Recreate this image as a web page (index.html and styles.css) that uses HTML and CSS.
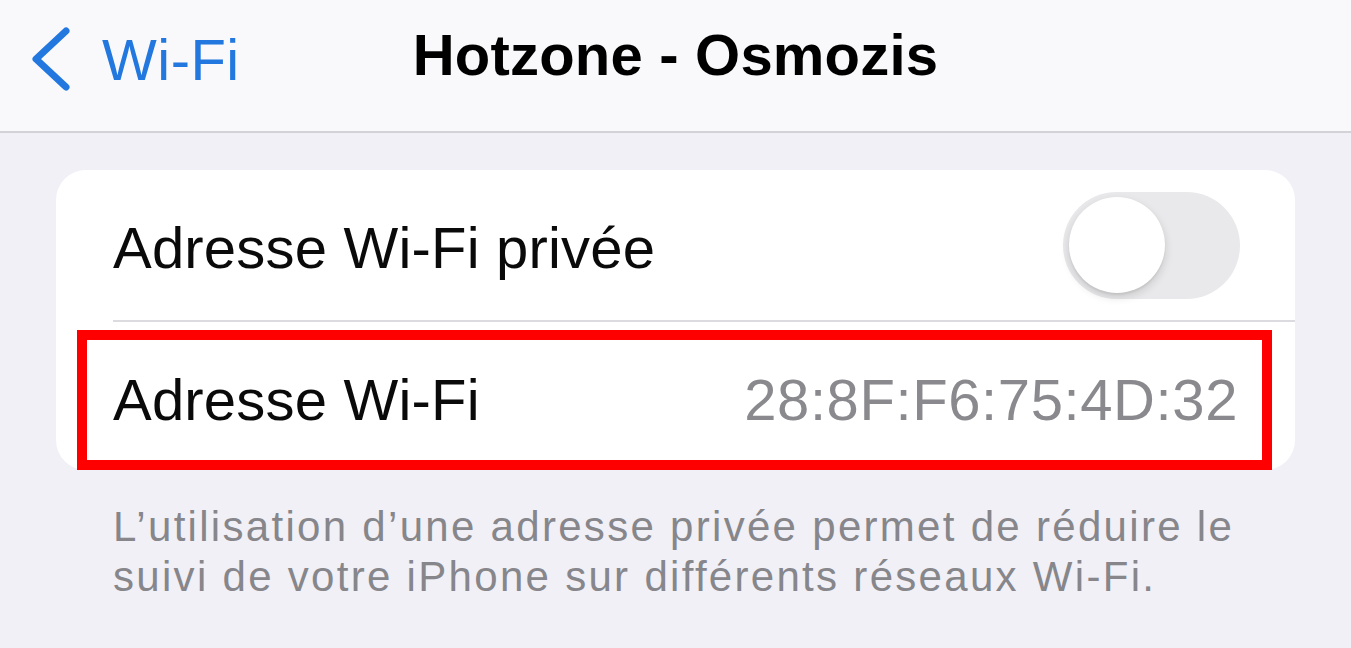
FILE: index.html
```html
<!DOCTYPE html>
<html lang="fr">
<head>
<meta charset="utf-8">
<title>Hotzone - Osmozis</title>
<link rel="stylesheet" href="styles.css">
</head>
<body>
  <header class="navbar">
    <a class="back">
      <svg class="chevron" width="44" height="70" viewBox="0 0 44 70" aria-hidden="true">
        <path d="M37 7 L7 35 L37 63" fill="none" stroke="#2378e0" stroke-width="7" stroke-linecap="round" stroke-linejoin="round"/>
      </svg>
      <span class="back-label">Wi-Fi</span>
    </a>
    <h1 class="title">Hotzone - Osmozis</h1>
    <div class="spacer"></div>
  </header>

  <main class="content">
    <section class="card">
      <div class="row row-first">
        <span class="label">Adresse Wi-Fi privée</span>
        <span class="toggle"><span class="knob"></span></span>
      </div>
      <div class="divider"></div>
      <div class="row row-second">
        <span class="label">Adresse Wi-Fi</span>
        <span class="value">28:8F:F6:75:4D:32</span>
      </div>
      <div class="highlight"></div>
    </section>
    <p class="footnote">L’utilisation d’une adresse privée permet de réduire le<br>suivi de votre iPhone sur différents réseaux Wi-Fi.</p>
  </main>
</body>
</html>
```

FILE: styles.css
```css
* { box-sizing: border-box; }
html, body {
  margin: 0;
  padding: 0;
}
body {
  background: #f1f0f6;
  font-family: "Liberation Sans", Arial, sans-serif;
  width: 1351px;
  height: 648px;
  overflow: hidden;
}
.navbar {
  height: 133px;
  background: #f9f9fb;
  border-bottom: 2px solid #d3d3d7;
  display: grid;
  grid-template-columns: 1fr auto 1fr;
  align-items: start;
  padding-top: 26px;
}
.back {
  display: flex;
  align-items: center;
  padding-left: 29px;
  color: #2378e0;
}
.chevron {
  display: block;
  margin-top: -2px;
}
.back-label {
  font-size: 58px;
  line-height: 58px;
  margin-left: 29px;
  letter-spacing: 0.5px;
}
.title {
  margin: 0;
  font-size: 58px;
  line-height: 58px;
  font-weight: 700;
  color: #000;
  letter-spacing: 0.2px;
}
.content {
  padding: 37px 56px 0;
}
.card {
  position: relative;
  background: #fff;
  border-radius: 30px;
}
.row {
  display: flex;
  align-items: center;
  justify-content: space-between;
  padding: 0 55px 0 57px;
}
.row-first { height: 150px; }
.row-first .label { margin-top: 5px; }
.row-second { height: 148px; padding-right: 57px; }
.row-second .label,
.row-second .value { margin-top: 8px; }
.label {
  font-size: 58px;
  line-height: 58px;
  color: #0a0a0a;
  letter-spacing: 0.2px;
}
.value {
  font-size: 58px;
  line-height: 58px;
  color: #8a8a8e;
  letter-spacing: 0.6px;
}
.divider {
  height: 2px;
  margin-left: 57px;
  background: #dcdce0;
}
.toggle {
  width: 177px;
  height: 107px;
  border-radius: 54px;
  background: #e9e9eb;
  padding: 6px;
  display: flex;
  align-items: center;
}
.knob {
  width: 96px;
  height: 96px;
  border-radius: 50%;
  background: #fff;
  box-shadow: 0 4px 10px rgba(0,0,0,0.14), 0 2px 2px rgba(0,0,0,0.06);
}
.highlight {
  position: absolute;
  left: 21px;
  top: 160px;
  width: 1195px;
  height: 140px;
  border: 10px solid #ff0000;
}
.footnote {
  margin: 32px 0 0 57px;
  font-size: 42px;
  line-height: 50px;
  letter-spacing: 2.3px;
  color: #86868b;
}
```
